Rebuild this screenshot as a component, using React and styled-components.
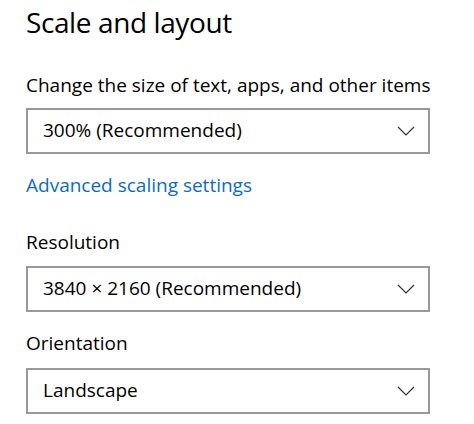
import React from "react";
import styled, { createGlobalStyle } from "styled-components";

const Global = createGlobalStyle`
  html, body { margin: 0; padding: 0; background: #fff; }
  body { font-family: "Open Sans", "Noto Sans", sans-serif; color: #000; }
`;

const Page = styled.div`
  width: 474px;
  height: 424px;
  box-sizing: border-box;
  padding: 2px 0 0 26px;
  display: flex;
  flex-direction: column;
  overflow: hidden;
`;

const Title = styled.h1`
  margin: 0;
  font-weight: 400;
  font-size: 28px;
  line-height: 40px;
  letter-spacing: -0.4px;
  color: #000;
`;

const Label = styled.div`
  font-size: 19px;
  line-height: 26px;
  color: #000;
  margin-top: ${(p) => p.$mt}px;
`;

const Select = styled.div`
  box-sizing: border-box;
  width: 404px;
  height: 46px;
  border: 2px solid #999;
  margin-top: ${(p) => p.$mt}px;
  display: flex;
  align-items: center;
  justify-content: space-between;
  padding: 0 13px 2px 15px;
  font-size: 19px;
  color: #000;
`;

const Chevron = styled.svg`
  width: 18px;
  height: 10px;
  flex: none;
  margin-top: 2px;
`;

const Link = styled.a`
  display: block;
  font-size: 19px;
  line-height: 26px;
  color: #0a6cc4;
  text-decoration: none;
  margin-top: 18px;
`;

const Arrow = () => (
  <Chevron viewBox="0 0 18 10">
    <polyline points="1,1 9,9 17,1" fill="none" stroke="#333" strokeWidth="1.2" />
  </Chevron>
);

export default function App() {
  return (
    <>
      <Global />
      <Page>
        <Title>Scale and layout</Title>
        <Label $mt={30}>Change the size of text, apps, and other items</Label>
        <Select $mt={10}>
          <span>300% (Recommended)</span>
          <Arrow />
        </Select>
        <Link href="#">Advanced scaling settings</Link>
        <Label $mt={31}>Resolution</Label>
        <Select $mt={11}>
          <span>3840 × 2160 (Recommended)</span>
          <Arrow />
        </Select>
        <Label $mt={18}>Orientation</Label>
        <Select $mt={12}>
          <span>Landscape</span>
          <Arrow />
        </Select>
      </Page>
    </>
  );
}
